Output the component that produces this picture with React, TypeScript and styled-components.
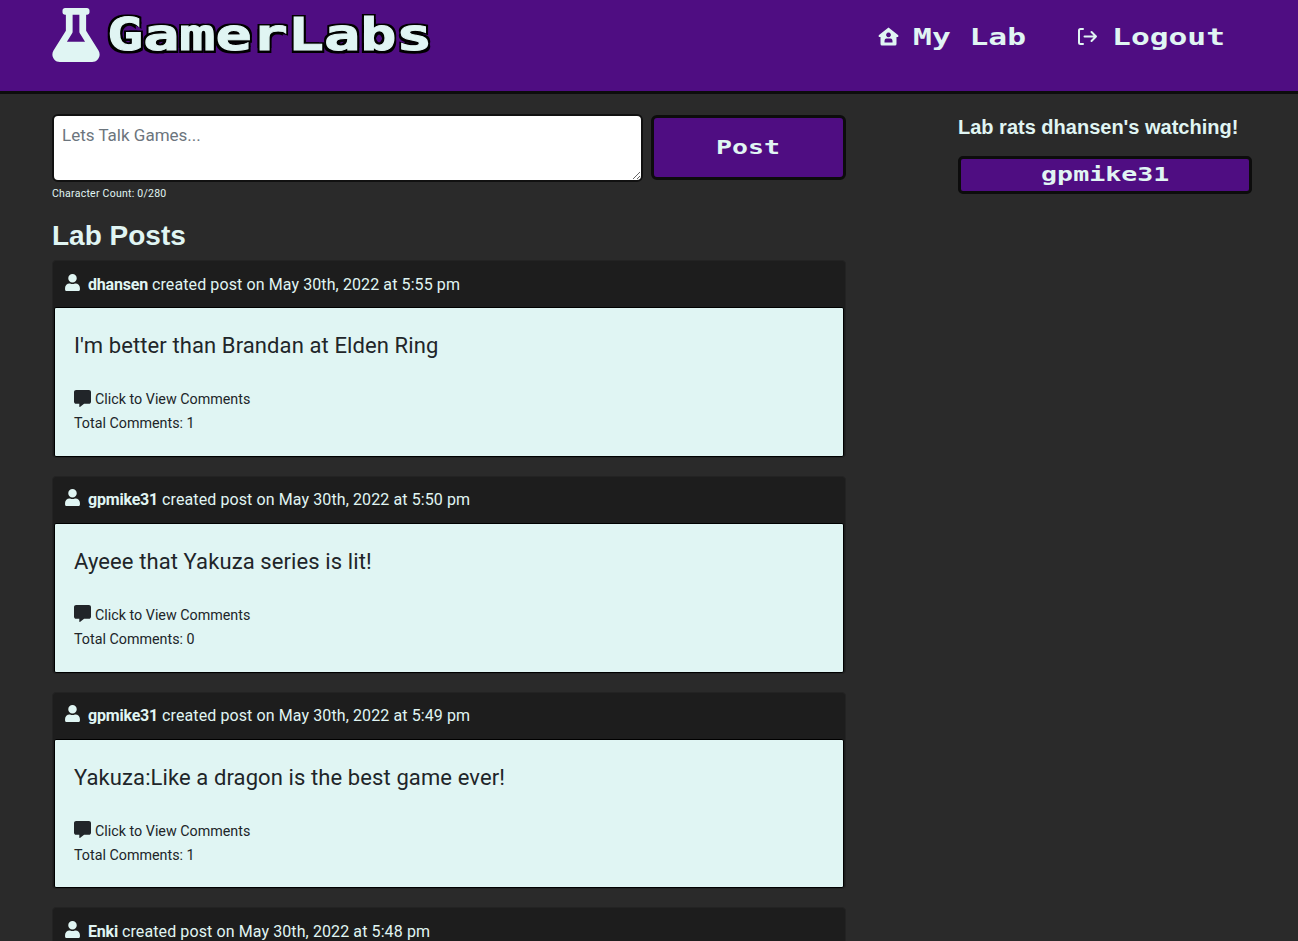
import React from "react";
import styled, { createGlobalStyle } from "styled-components";
import { FaFlask, FaUser, FaCommentAlt } from "react-icons/fa";

const MINT = "#e0f5f3";
const PURPLE = "#4f0d82";
const PIXEL = `"DejaVu Sans Mono", "Liberation Mono", monospace`;
const BODY = `Roboto, "Noto Sans", sans-serif`;

const GlobalStyle = createGlobalStyle`
  html, body {
    margin: 0;
    height: 941px;
    overflow: hidden;
    background: #2a2a2a;
    font-family: ${BODY};
  }
  * { box-sizing: border-box; }
`;

const Header = styled.header`
  height: 94px;
  background: ${PURPLE};
  border-bottom: 3px solid #0c0c0c;
  display: flex;
  justify-content: space-between;
  padding: 0 74px 0 52px;
`;

const Brand = styled.div`
  display: flex;
  align-items: flex-start;
  gap: 7px;
  color: ${MINT};
  svg {
    width: 48px;
    height: 54px;
    margin-top: 8px;
  }
`;

// the pixel font is wider than anything installed, so stretch the mono
const Stretched = styled.span`
  display: inline-block;
  transform: scaleX(1.33);
`;

const BrandName = styled.h1`
  margin: 9px 0 0;
  font: bold 45px/52px ${PIXEL};
  transform: scaleX(1.335);
  transform-origin: left;
  -webkit-text-stroke: 1px ${MINT};
  text-shadow: 2px 3px 0 #000, -2px -2px 0 #000, 2px -2px 0 #000, -2px 3px 0 #000;
`;

const Nav = styled.nav`
  display: flex;
  gap: 52px;
  padding-top: 21px;
`;

const NavLink = styled.a`
  display: flex;
  align-items: center;
  height: 32px;
  gap: 15px;
  color: ${MINT};
  font: bold 23px/32px ${PIXEL};
  white-space: pre;
  svg {
    width: 21px;
    height: 19px;
    margin-top: -2px;
    flex: none;
  }
  ${Stretched} {
    margin: 0 14px;
    transform: scaleX(1.36);
  }
`;

const Page = styled.main`
  display: flex;
  padding: 20px 46px 0 52px;
  justify-content: space-between;
`;

const Feed = styled.section`
  width: 794px;
`;

const Composer = styled.form`
  display: flex;
  gap: 8px;
`;

const PostInput = styled.textarea`
  width: 591px;
  height: 68px;
  padding: 7px 8px;
  display: block;
  background: #fff;
  border: 2px solid #111;
  border-radius: 6px;
  outline: none;
  font: 17px/24px ${BODY};
  &::placeholder {
    color: #6c757d;
  }
`;

const PostButton = styled.button`
  width: 195px;
  height: 65px;
  margin-top: 1px;
  padding-bottom: 3px;
  background: ${PURPLE};
  border: 3px solid #0c0c0c;
  border-radius: 6px;
  color: ${MINT};
  font: bold 20px ${PIXEL};
`;

const CharCount = styled.div`
  margin-top: 5px;
  color: ${MINT};
  font-size: 10.5px;
  line-height: 13px;
  letter-spacing: 0.25px;
`;

const Title = styled.h2`
  margin: 19px 0 7px;
  color: ${MINT};
  font: bold 28px/34px "Liberation Sans", Arial, sans-serif;
`;

const Card = styled.article`
  height: 197.75px;
  margin-bottom: 18px;
  padding: 0 1px;
  display: flex;
  flex-direction: column;
  border-radius: 4px;
  border: 1px solid #232323;
  background: #1d1d1d;
`;

const CardHead = styled.div`
  height: 46px;
  flex: none;
  display: flex;
  align-items: center;
  padding-left: 11px;
  color: ${MINT};
  font-size: 16px;
  letter-spacing: 0.1px;
  white-space: pre;
  svg {
    width: 15px;
    height: 17px;
    margin: -4px 8px 0 0;
  }
  b {
    letter-spacing: -0.2px;
  }
`;

const CardBody = styled.div`
  flex: 1;
  padding: 23px 19px 0;
  background: ${MINT};
  border: 1px solid #000;
  border-radius: 2px;
  color: #212529;
`;

const PostText = styled.p`
  margin: 0 0 26px;
  font-size: 22px;
  line-height: 30px;
  letter-spacing: 0.1px;
`;

const CommentLink = styled.div`
  display: flex;
  align-items: center;
  gap: 4px;
  font-size: 14.3px;
  line-height: 24px;
  svg {
    width: 17px;
    height: 17px;
    margin-top: -2px;
    color: #212529;
  }
`;

const CommentCount = styled.div`
  font-size: 14.3px;
  line-height: 24px;
`;

const Sidebar = styled.aside`
  width: 294px;
`;

const SideTitle = styled.h3`
  margin: 0 0 16px;
  color: ${MINT};
  font: bold 20px/26px "Liberation Sans", Arial, sans-serif;
  white-space: nowrap;
`;

const RatButton = styled.a`
  display: block;
  height: 38px;
  background: ${PURPLE};
  border: 3px solid #0c0c0c;
  border-radius: 5px;
  color: ${MINT};
  text-align: center;
  font: bold 20px/30px ${PIXEL};
`;

const HouseIcon = () => (
  <svg viewBox="0 0 21 19" fill="currentColor" fillRule="evenodd">
    <path d="M10.5 0.5 L20 8 Q21 9 20 10 L18.5 10 V17 Q18.5 18.5 17 18.5 H4 Q2.5 18.5 2.5 17 V10 L1 10 Q0 9 1 8 Z M10.5 5.5 a2.4 2.4 0 1 0 0.01 0 Z M6.5 15.5 H14.5 V14.5 Q14.5 11.5 12.5 11.5 H8.5 Q6.5 11.5 6.5 14.5 Z" />
  </svg>
);

const LogoutIcon = () => (
  <svg viewBox="0 0 21 19" fill="none" stroke="currentColor" strokeWidth="2" strokeLinecap="round" strokeLinejoin="round">
    <path d="M6 2H3.5Q2 2 2 3.5V15.5Q2 17 3.5 17H6" />
    <path d="M7.5 9.5H19M14.5 5l4.5 4.5-4.5 4.5" />
  </svg>
);

type Post = { user: string; date: string; text: string; comments: number };

const posts: Post[] = [
  { user: "dhansen", date: "May 30th, 2022 at 5:55 pm", text: "I'm better than Brandan at Elden Ring", comments: 1 },
  { user: "gpmike31", date: "May 30th, 2022 at 5:50 pm", text: "Ayeee that Yakuza series is lit!", comments: 0 },
  { user: "gpmike31", date: "May 30th, 2022 at 5:49 pm", text: "Yakuza:Like a dragon is the best game ever!", comments: 1 },
  { user: "Enki", date: "May 30th, 2022 at 5:48 pm", text: "", comments: 0 },
];

const App = () => (
  <>
    <GlobalStyle />
    <Header>
      <Brand>
        <FaFlask />
        <BrandName>GamerLabs</BrandName>
      </Brand>
      <Nav>
        <NavLink>
          <HouseIcon />
          <Stretched>My Lab</Stretched>
        </NavLink>
        <NavLink>
          <LogoutIcon />
          <Stretched>Logout</Stretched>
        </NavLink>
      </Nav>
    </Header>
    <Page>
      <Feed>
        <Composer>
          <div>
            <PostInput placeholder="Lets Talk Games..." />
            <CharCount>Character Count: 0/280</CharCount>
          </div>
          <PostButton type="button">
            <Stretched>Post</Stretched>
          </PostButton>
        </Composer>
        <Title>Lab Posts</Title>
        {posts.map((post, i) => (
          <Card key={i}>
            <CardHead>
              <FaUser />
              <b>{post.user}</b> created post on {post.date}
            </CardHead>
            <CardBody>
              <PostText>{post.text}</PostText>
              <CommentLink>
                <FaCommentAlt />
                Click to View Comments
              </CommentLink>
              <CommentCount>Total Comments: {post.comments}</CommentCount>
            </CardBody>
          </Card>
        ))}
      </Feed>
      <Sidebar>
        <SideTitle>Lab rats dhansen's watching!</SideTitle>
        <RatButton>
          <Stretched>gpmike31</Stretched>
        </RatButton>
      </Sidebar>
    </Page>
  </>
);

export default App;
